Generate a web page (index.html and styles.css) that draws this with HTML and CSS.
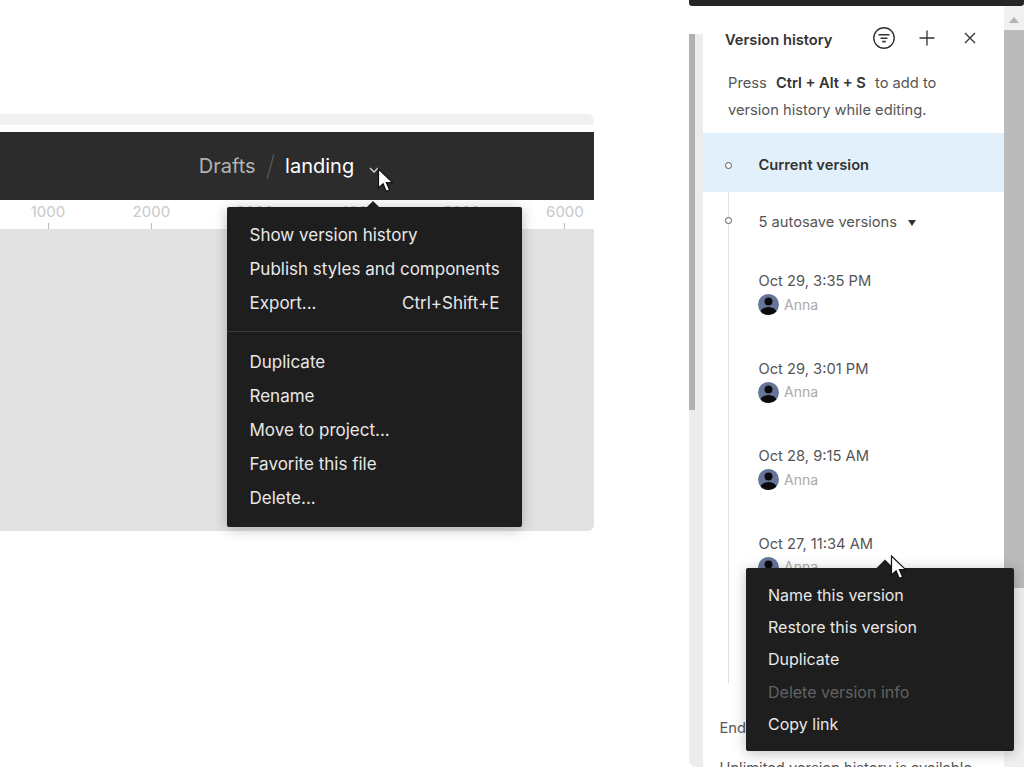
FILE: index.html
```html
<!DOCTYPE html>
<html lang="en">
<head>
<meta charset="utf-8">
<title>Version history</title>
<link rel="stylesheet" href="styles.css">
</head>
<body>
<main class="page">
  <section class="editor">
    <div class="tab-strip"></div>
    <header class="title-bar">
      <span class="crumb">Drafts</span>
      <span class="slash">/</span>
      <span class="file">landing</span>
      <svg class="chevron" width="10" height="6" viewBox="0 0 10 6"><path d="M1 1l4 4 4-4" fill="none" stroke="#ddd" stroke-width="1.3"/></svg>
    </header>
    <div class="ruler">
      <div class="tick">1000</div>
      <div class="tick">2000</div>
      <div class="tick">3000</div>
      <div class="tick">4000</div>
      <div class="tick">5000</div>
      <div class="tick">6000</div>
    </div>
    <div class="canvas"></div>
    <svg class="cursor cursor-left" width="18" height="26" viewBox="0 0 18 26"><path d="M1.5 1v19l4.6-4.2 3.2 7.6 3.3-1.4-3.2-7.4h6.2z" fill="#fff" stroke="#111" stroke-width="1.2"/></svg>
    <div class="menu file-menu">
      <span class="notch"></span>
      <div class="menu-group">
        <div class="menu-item">Show version history</div>
        <div class="menu-item">Publish styles and components</div>
        <div class="menu-item split"><span>Export...</span><span>Ctrl+Shift+E</span></div>
      </div>
      <div class="menu-group second">
        <div class="menu-item">Duplicate</div>
        <div class="menu-item">Rename</div>
        <div class="menu-item">Move to project...</div>
        <div class="menu-item">Favorite this file</div>
        <div class="menu-item">Delete...</div>
      </div>
    </div>
  </section>

  <section class="history-window">
    <div class="window-top"></div>
    <div class="window-body">
      <div class="gutter"><div class="gutter-thumb"></div></div>
      <div class="panel">
        <header class="panel-head">
          <h1 class="panel-title">Version history</h1>
          <svg class="icon filter-icon" width="24" height="24" viewBox="0 0 24 24"><circle cx="12" cy="12" r="10.2" fill="none" stroke="#333" stroke-width="1.4"/><path d="M6.5 8.8h11M8.5 12.2h7M10.3 15.6h3.4" stroke="#333" stroke-width="1.6" fill="none"/></svg>
          <svg class="icon plus-icon" width="16" height="16" viewBox="0 0 16 16"><path d="M8 0.5v15M0.5 8h15" stroke="#333" stroke-width="1.3" fill="none"/></svg>
          <svg class="icon close-icon" width="12" height="12" viewBox="0 0 12 12"><path d="M1 1l10 10M11 1L1 11" stroke="#333" stroke-width="1.3" fill="none"/></svg>
        </header>
        <p class="hint">Press <b>Ctrl + Alt + S</b> to add to<br>version history while editing.</p>
        <div class="timeline">
          <div class="current"><span class="dot"></span>Current version</div>
          <div class="autosave"><span class="dot"></span>5 autosave versions <span class="caret"></span></div>
          <div class="version"><div class="when">Oct 29, 3:35 PM</div><div class="who"><svg class="avatar" viewBox="0 0 20 20"><use href="#person"/></svg>Anna</div></div>
          <div class="version"><div class="when">Oct 29, 3:01 PM</div><div class="who"><svg class="avatar" viewBox="0 0 20 20"><use href="#person"/></svg>Anna</div></div>
          <div class="version"><div class="when">Oct 28, 9:15 AM</div><div class="who"><svg class="avatar" viewBox="0 0 20 20"><use href="#person"/></svg>Anna</div></div>
          <div class="version"><div class="when">Oct 27, 11:34 AM</div><div class="who"><svg class="avatar" viewBox="0 0 20 20"><use href="#person"/></svg>Anna</div></div>
        </div>
        <p class="end">End of version history.</p>
        <p class="upsell">Unlimited version history is available</p>
      </div>
      <div class="scrollbar">
        <svg class="scroll-arrow" width="10" height="6" viewBox="0 0 10 6"><path d="M5 0l5 6H0z" fill="#b4b4b4"/></svg>
        <div class="scroll-thumb"></div>
      </div>
    </div>
    <svg class="cursor cursor-right" width="18" height="26" viewBox="0 0 18 26"><path d="M1.5 1v19l4.6-4.2 3.2 7.6 3.3-1.4-3.2-7.4h6.2z" fill="#fff" stroke="#111" stroke-width="1.2"/></svg>
    <div class="menu version-menu">
      <span class="notch"></span>
      <div class="menu-item">Name this version</div>
      <div class="menu-item">Restore this version</div>
      <div class="menu-item">Duplicate</div>
      <div class="menu-item disabled">Delete version info</div>
      <div class="menu-item">Copy link</div>
    </div>
  </section>
</main>
<svg class="defs" width="0" height="0"><defs>
  <g id="person"><circle cx="10" cy="10" r="10" fill="#66769a"/><clipPath id="disc"><circle cx="10" cy="10" r="10"/></clipPath><circle cx="10" cy="7.2" r="3.8" fill="#0b0b0b"/><ellipse cx="10" cy="18" rx="8" ry="5.6" fill="#0b0b0b" clip-path="url(#disc)"/></g>
</defs></svg>
</body>
</html>
```

FILE: styles.css
```css
* { box-sizing: border-box; }
html, body { margin: 0; height: 100%; }
body { background: #fff; font-family: Inter, "Noto Sans", sans-serif; overflow: hidden; color: #333; }
.page { display: flex; width: 1024px; height: 767px; overflow: hidden; }
.defs { position: absolute; }

/* left: editor */
.editor { position: relative; width: 594px; height: 417px; margin-top: 114px; margin-right: 95px; display: flex; flex-direction: column; border-radius: 0 6px 6px 0; background: #fff; flex: none; }
.tab-strip { height: 11px; margin-bottom: 7px; background: #f0f2f2; border-radius: 0 6px 0 0; }
.title-bar { height: 68px; background: #2c2c2c; display: flex; align-items: center; justify-content: center; gap: 10px; font-size: 20px; padding-right: 16px; flex: none; }
.crumb { color: #b3b3b3; }
.slash { color: #5c5c5c; font-size: 28px; font-weight: 200; }
.file { color: #fff; }
.chevron { margin: 7px 0 0 5px; }
.ruler { height: 29px; display: flex; justify-content: space-between; padding: 3px 9px 0 28px; background: #fff; flex: none; overflow: hidden; }
.tick { width: 40px; font-size: 15px; line-height: 17px; color: #c9c9c9; text-align: center; height: 26px; }
.tick::after { content: ""; display: block; width: 1px; height: 6px; background: #bbb; margin: 3px auto 0; }
.canvas { flex: 1; background: #e2e2e2; border-radius: 0 0 6px 0; }

.menu { position: absolute; background: #1e1e1e; color: #e8e8e8; border-radius: 2px; box-shadow: 0 2px 14px rgba(0,0,0,.25); font-size: 16px; z-index: 2; }
.notch { position: absolute; top: -6px; width: 12px; height: 12px; background: #1e1e1e; transform: rotate(45deg); }
.menu-item { height: 34px; line-height: 34px; padding: 0 22.5px; white-space: nowrap; }
.split { display: flex; justify-content: space-between; }
.file-menu { left: 227px; top: 93px; width: 295px; height: 320px; padding-top: 11px; font-size: 17px; }
.file-menu .notch { left: 141px; top: -4px; width: 10px; height: 10px; }
.menu-group.second { margin-top: 11px; border-top: 1px solid #383838; padding-top: 13px; }
.cursor { position: absolute; z-index: 3; }
.cursor-left { left: 377px; top: 54px; }

/* right: version history */
.history-window { position: relative; width: 335px; height: 767px; flex: none; }
.window-top { height: 6px; background: #262626; border-radius: 0 0 3px 3px; }
.window-body { display: flex; height: 761px; }
.gutter { width: 14px; background: linear-gradient(#fff 28px, #ececec 28px); flex: none; border-radius: 0 0 0 8px; }
.gutter-thumb { width: 6px; height: 376px; margin-top: 28px; background: #b1b1b1; }
.panel { width: 301px; flex: none; background: #fff; overflow: hidden; display: flex; flex-direction: column; font-size: 14.7px; }
.panel-head { display: flex; align-items: center; height: 32px; margin-top: 15px; padding: 2px 0 0 22px; flex: none; }
.panel-title { margin: 4px 0 0; font-size: 14.7px; font-weight: 600; color: #333; width: 147px; flex: none; }
.filter-icon { flex: none; }
.plus-icon { margin-left: 23px; flex: none; }
.close-icon { margin-left: 29px; flex: none; }
.hint { margin: 17px 0 0; padding-left: 25px; line-height: 27px; color: #555; flex: none; }
.hint b { color: #333; font-weight: 600; margin: 0 5px; }
.timeline { margin-top: 9px; position: relative; height: 550px; flex: none; }
.timeline::before { content: ""; position: absolute; left: 25px; top: 32px; width: 1px; bottom: 0; background: #e0e0e0; }
.dot { position: absolute; left: 22px; width: 7px; height: 7px; border: 1.3px solid #555; border-radius: 50%; background: #fff; z-index: 1; top: 29px; }
.current { position: relative; height: 59px; background: #e1f0fb; padding-left: 55.5px; font-weight: 600; color: #333; line-height: 65px; }
.autosave { position: relative; height: 59px; padding-left: 55.5px; line-height: 60px; color: #555; }
.autosave .dot { top: 25px; }
.caret { display: inline-block; margin-left: 7px; vertical-align: 1px; width: 0; height: 0; border: 4px solid transparent; border-top: 6px solid #333; border-bottom: 0; }
.version { height: 87.5px; padding: 20px 0 0 55.5px; color: #555; }
.when { line-height: 20px; }
.who { display: flex; align-items: center; gap: 5px; color: #aaa; font-size: 14px; line-height: 20px; margin: 3px 0 0 -0.5px; }
.avatar { width: 21px; height: 21px; flex: none; }
.end { margin: 35px 0 0 16.5px; color: #555; line-height: 20px; white-space: nowrap; flex: none; }
.upsell { margin: 20px 0 0 16.5px; color: #555; line-height: 20px; white-space: nowrap; flex: none; }
.scrollbar { width: 20px; flex: none; background: #f0f0f0; display: flex; flex-direction: column; align-items: center; }
.scroll-arrow { margin-top: 11px; margin-bottom: 7px; flex: none; }
.scroll-thumb { width: 20px; height: 558px; background: #bbb; flex: none; }

.version-menu { left: 57px; top: 568px; width: 268px; height: 183px; padding-top: 11px; }
.version-menu .notch { left: 133px; }
.version-menu .menu-item { height: 32.2px; line-height: 32.2px; padding: 0 22px; }
.disabled { color: #626262; }
.cursor-right { left: 201px; top: 555px; }
```
